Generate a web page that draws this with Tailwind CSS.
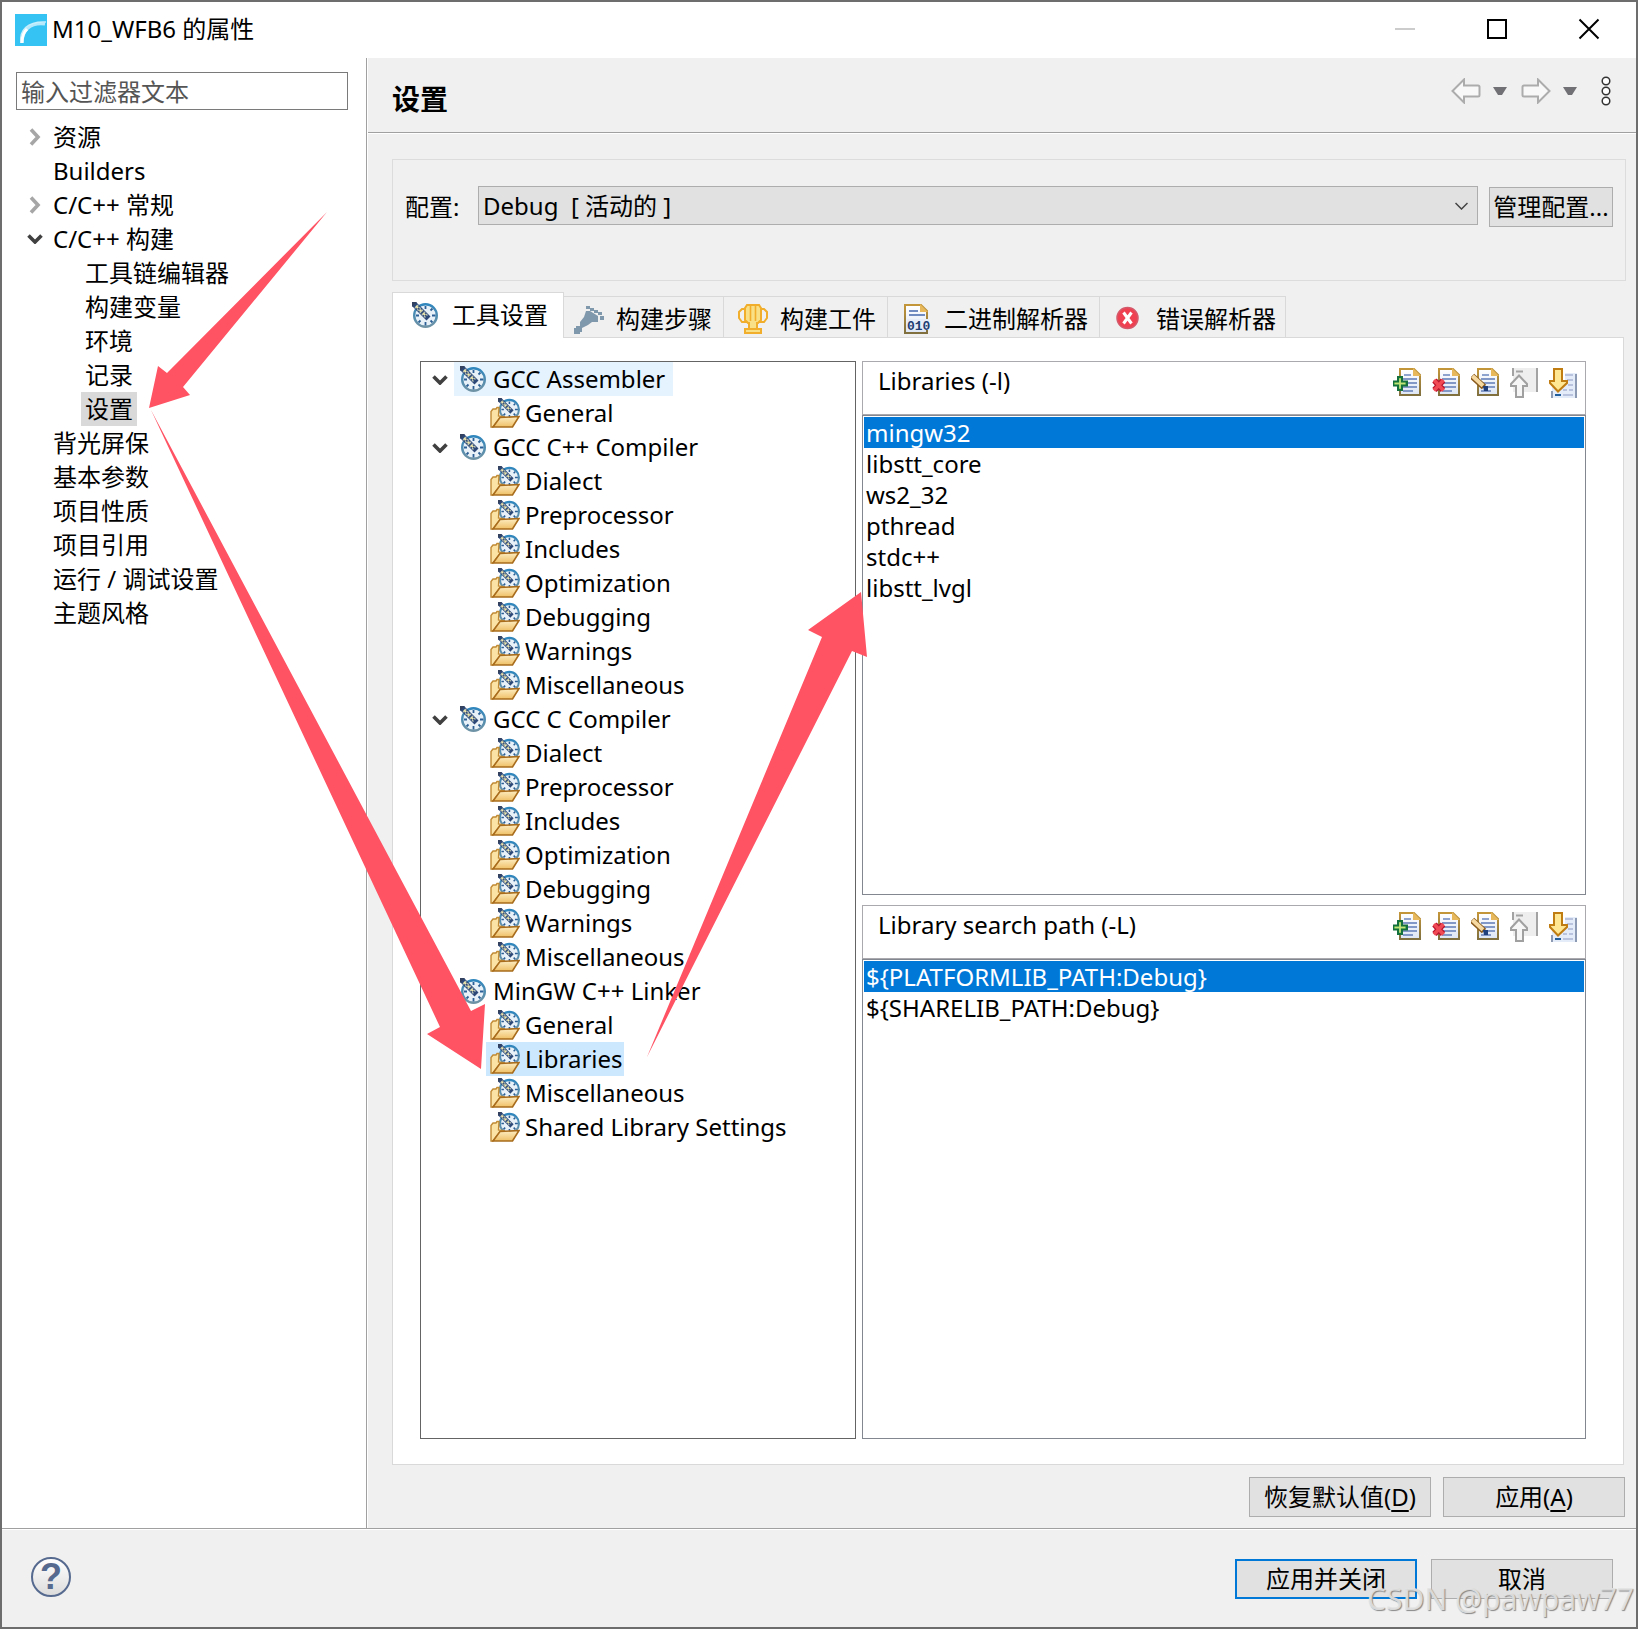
<!DOCTYPE html>
<html lang="zh-CN">
<head>
<meta charset="utf-8">
<meta name="viewport" content="width=device-width, initial-scale=1">
<title>M10_WFB6 的属性</title>
<script src="https://cdn.jsdelivr.net/npm/@tailwindcss/browser@4"></script>
</head>
<body class="relative min-h-screen overflow-x-hidden bg-[#f0f0f0] font-['Noto_Sans','Noto_Sans_CJK_SC',sans-serif] text-[24px] leading-[34px] text-black">

<!-- Shared icons -->
<svg class="absolute size-0" aria-hidden="true">
  <defs>
    <linearGradient id="gold" x1="0" y1="0" x2="0" y2="1"><stop offset="0" stop-color="#fdeec4"/><stop offset="1" stop-color="#efc066"/></linearGradient>
    <linearGradient id="frame" x1="0" y1="0" x2="0" y2="1"><stop offset="0" stop-color="#c4963a"/><stop offset="1" stop-color="#80703f"/></linearGradient>
    <linearGradient id="paper" x1="0" y1="0" x2="0" y2="1"><stop offset="0" stop-color="#ffffff"/><stop offset="1" stop-color="#dde6f5"/></linearGradient>
    <linearGradient id="rim" x1="0" y1="0" x2="0" y2="1"><stop offset="0" stop-color="#2f86bd"/><stop offset="1" stop-color="#6f93a5"/></linearGradient>
  </defs>
  <symbol id="open" viewBox="0 0 16 10"><path d="M1.5 1.5 8 8 14.500 1.500" fill="none" stroke="#404040" stroke-width="3.600"/></symbol>
  <symbol id="closed" viewBox="0 0 12 18"><path d="M2 1.500 9 9 2 16.500" fill="none" stroke="#a6a6a6" stroke-width="3.600"/></symbol>
  <symbol id="tool" viewBox="0 0 26 26">
    <circle cx="13.500" cy="13.500" r="11.300" fill="#e9f1f8" stroke="url(#rim)" stroke-width="2.400"/>
    <path d="M13.500 4v3M13.500 20v3.500M4 13.500h3M20 13.500h3.500M20.500 6.500l-2 2M6.500 20.500l2-2M20.500 20.500l-2-2" stroke="#2b5f95" stroke-width="1.800"/>
    <path d="M2 2 16.500 16.500" stroke="#2c4878" stroke-width="5.600"/>
    <path d="M3 5 14 16M5 3l11 11" stroke="#b9c3b4" stroke-width="1.300" stroke-dasharray="2 1.200"/>
    <path d="M4 4l10 10" stroke="#f3e9a8" stroke-width="1.800" stroke-dasharray="3 2"/>
    <path d="M0 0h5L0 5z" fill="#33415f"/>
  </symbol>
  <symbol id="category" viewBox="0 0 30 30">
    <svg x="8" y="0" width="22" height="22"><use href="#tool"/></svg>
    <path d="M1 13.500 3 11h3l1-1.500h2L8.500 18 15 19l-5 1-7 9H1z" fill="#fbe3a6" stroke="#c18b35" stroke-width="1.400"/>
    <path d="M10 19.500 29 18.500 22.500 29H3z" fill="url(#gold)" stroke="#a86c1c" stroke-width="1.600"/>
  </symbol>
  <symbol id="page" viewBox="0 0 30 30">
    <path d="M7 1h14l6 6v20H7z" fill="url(#paper)" stroke="url(#frame)" stroke-width="2"/>
    <path d="M20 0v8h8z" fill="#e8b95c"/>
    <path d="M11 7h7" stroke="#8fa3cf" stroke-width="2"/>
    <path d="M10 11h14M10 15h14M10 19h14M10 23h10" stroke="#8299c8" stroke-width="2"/>
  </symbol>
  <symbol id="add" viewBox="0 0 30 30"><use href="#page"/><path d="M5 9h4v4.500h5v4H9V22H5v-4.500H0v-4h5z" fill="#72c056" stroke="#14703c" stroke-width="2"/><path d="M7 10.500v10M2 15.500h10" stroke="#c4e27a" stroke-width="1.600"/></symbol>
  <symbol id="delete" viewBox="0 0 30 30"><use href="#page"/><path d="M2.500 12.500 11 22M11 12.500 2.500 22" stroke="#b8142c" stroke-width="6"/><path d="M2 12 11.500 22.500M11.500 12 2 22.500" stroke="#f04a55" stroke-width="3.400"/></symbol>
  <symbol id="edit" viewBox="0 0 30 30"><use href="#page"/><path d="M1 8 13 19" stroke="#8a5a1c" stroke-width="6.400"/><path d="M1.500 8 12 17.800" stroke="#f5d9a0" stroke-width="4"/><path d="M12 18h5v5h-4z" fill="#20407c"/></symbol>
  <symbol id="up" viewBox="0 0 30 30"><path d="M3 0h25v24H3z" fill="#eeeeee"/><path d="M3 0v8M27 0v24M6 3.500h7" stroke="#a3a3a3" stroke-width="2"/><path d="M9 7.500 17 16v2h-4v11H6V18H1v-2z" fill="#f6f6f6" stroke="#a0a0a0" stroke-width="2"/></symbol>
  <symbol id="down" viewBox="0 0 30 30"><path d="M3 18h13V5h12v25H3z" fill="#e4ecf9"/><path d="M27 6v24M3 23v7" stroke="#8c9ab4" stroke-width="2"/><path d="M16 7h8M18 12h6M19 17h5M14 22h4M20 22h4M14 27h10" stroke="#b9c3dd" stroke-width="2"/><path d="M6 27h6" stroke="#235f9c" stroke-width="2"/><path d="M5 1h8v12h5v2L9 23.500 1 15v-2h4z" fill="#ffe793" stroke="#c07d12" stroke-width="2"/></symbol>
</svg>

<div class="flex min-h-screen flex-col border-2 border-[#6d6d6d]">

  <!-- Title bar -->
  <header class="flex h-14 shrink-0 items-center bg-white pl-[13px] pr-9 pb-0.5">
    <svg class="mt-0.5 size-8 shrink-0" viewBox="0 0 32 32" aria-hidden="true"><path fill="#35c3f3" d="M0 0h32v32H0z"/><path d="M6 29C4 17 12 7 31 8" fill="none" stroke="#fff" stroke-width="1.500" opacity=".7"/><path d="M7 29C7 17 15 8 30 10" fill="none" stroke="#d6f3fd" stroke-width="3" opacity=".8"/><path d="M7 29c0-8 2-11 5-14" fill="none" stroke="#fff" stroke-width="3"/></svg>
    <h1 class="ml-[5px] grow">M10_WFB6 的属性</h1>
    <div class="flex items-center gap-[70px]">
      <button aria-label="最小化" disabled><svg class="block size-[22px]" viewBox="0 0 22 22"><path d="M1 11h20" stroke="#cccccc" stroke-width="2"/></svg></button>
      <button aria-label="最大化"><svg class="block size-[22px]" viewBox="0 0 22 22"><path d="M2 2h18v18H2z" fill="none" stroke="#000" stroke-width="2"/></svg></button>
      <button aria-label="关闭"><svg class="block size-[22px]" viewBox="0 0 22 22"><path d="M1.500 1.500l19 19M20.500 1.500l-19 19" stroke="#000" stroke-width="2"/></svg></button>
    </div>
  </header>

  <div class="flex grow">
    <!-- Property pages -->
    <nav class="w-[365px] shrink-0 border-r border-[#a0a0a0] bg-white pl-3.5 pr-[18px] pt-3.5" aria-label="属性页">
      <input type="text" aria-label="输入过滤器文本" placeholder="输入过滤器文本" class="block h-[38px] w-full border border-[#7a7a7a] bg-white px-1 placeholder:text-[#555555]">
      <ul class="mt-2.5 pl-[11px]">
        <li class="flex h-[34px] items-center gap-1.5"><span class="flex w-4 justify-center"><svg class="h-[18px] w-3"><use href="#closed"/></svg></span><a href="#" class="px-1">资源</a></li>
        <li class="flex h-[34px] items-center pl-[22px]"><a href="#" class="px-1">Builders</a></li>
        <li class="flex h-[34px] items-center gap-1.5"><span class="flex w-4 justify-center"><svg class="h-[18px] w-3"><use href="#closed"/></svg></span><a href="#" class="px-1">C/C++ 常规</a></li>
        <li>
          <div class="flex h-[34px] items-center gap-1.5"><svg class="h-2.5 w-4"><use href="#open"/></svg><a href="#" class="px-1">C/C++ 构建</a></div>
          <ul class="pl-[54px]">
            <li class="flex h-[34px] items-center"><a href="#" class="px-1">工具链编辑器</a></li>
            <li class="flex h-[34px] items-center"><a href="#" class="px-1">构建变量</a></li>
            <li class="flex h-[34px] items-center"><a href="#" class="px-1">环境</a></li>
            <li class="flex h-[34px] items-center"><a href="#" class="px-1">记录</a></li>
            <li class="flex h-[34px] items-center"><a href="#" class="bg-[#d9d9d9] px-1" aria-current="page">设置</a></li>
          </ul>
        </li>
        <li class="flex h-[34px] items-center pl-[22px]"><a href="#" class="px-1">背光屏保</a></li>
        <li class="flex h-[34px] items-center pl-[22px]"><a href="#" class="px-1">基本参数</a></li>
        <li class="flex h-[34px] items-center pl-[22px]"><a href="#" class="px-1">项目性质</a></li>
        <li class="flex h-[34px] items-center pl-[22px]"><a href="#" class="px-1">项目引用</a></li>
        <li class="flex h-[34px] items-center pl-[22px]"><a href="#" class="px-1">运行 / 调试设置</a></li>
        <li class="flex h-[34px] items-center pl-[22px]"><a href="#" class="px-1">主题风格</a></li>
      </ul>
    </nav>

    <main class="flex min-w-0 grow flex-col border-l border-white">
      <!-- Page heading -->
      <div class="flex h-[75px] shrink-0 items-start border-b border-[#a0a0a0] pl-6 pr-[25px] pt-5">
        <h2 class="grow pt-1 text-[28px] font-bold">设置</h2>
        <div class="flex h-[26px] items-center">
          <button aria-label="后退"><svg class="block h-[26px] w-[30px]" viewBox="0 0 30 26"><path d="M1.500 13 13 1.500v6h14q1.500 0 1.500 1.500v8q0 1.500-1.500 1.500H13v6z" fill="#f8f8f8" stroke="#acacac" stroke-width="2"/></svg></button>
          <button class="ml-3" aria-label="后退历史"><svg class="block h-2 w-3.5" viewBox="0 0 14 8"><path d="M0 0h14L9 8H5z" fill="#707075"/></svg></button>
          <button class="ml-3.5" aria-label="前进"><svg class="block h-[26px] w-[30px]" viewBox="0 0 30 26"><path d="M28.500 13 17 1.500v6H3q-1.500 0-1.500 1.500v8q0 1.500 1.500 1.500h14v6z" fill="#f8f8f8" stroke="#acacac" stroke-width="2"/></svg></button>
          <button class="ml-3" aria-label="前进历史"><svg class="block h-2 w-3.5" viewBox="0 0 14 8"><path d="M0 0h14L9 8H5z" fill="#707075"/></svg></button>
          <button class="ml-6" aria-label="更多"><svg class="block h-[30px] w-2.5" viewBox="0 0 10 30"><g fill="#fff" stroke="#333" stroke-width="1.500"><circle cx="5" cy="5" r="3.800"/><circle cx="5" cy="15" r="3.800"/><circle cx="5" cy="25" r="3.800"/></g></svg></button>
        </div>
      </div>

      <div class="flex grow flex-col border-t border-white pb-[11px] pl-6 pr-2.5 pt-[25px]">
        <!-- Build configuration -->
        <section class="flex h-[122px] shrink-0 items-start border border-[#dcdcdc] px-3 pt-[26px]">
          <label for="config" class="w-[73px] shrink-0 pt-1">配置:</label>
          <div class="relative min-w-0 grow">
            <select id="config" class="block h-[39px] w-full appearance-none border border-[#adadad] bg-[#e1e1e1] pl-1 pr-10 leading-[34px]">
              <option>Debug&nbsp; [ 活动的 ]</option>
            </select>
            <svg class="pointer-events-none absolute right-2.5 top-4 h-2 w-[13px]" viewBox="0 0 13 8"><path d="M.5 1 6.500 7l6-6" fill="none" stroke="#444" stroke-width="1.500"/></svg>
          </div>
          <button class="ml-[11px] mt-px h-10 w-[124px] shrink-0 border border-[#adadad] bg-[#e1e1e1] whitespace-nowrap">管理配置...</button>
        </section>

        <!-- Tabs -->
        <div class="mr-0.5 mt-[11px] flex h-[46px] shrink-0 items-end whitespace-nowrap" role="tablist">
          <button role="tab" aria-selected="true" class="flex h-full items-center gap-3.5 border-x border-t border-[#d9d9d9] bg-white pb-0.5 pl-[19px] pr-[15px]"><svg class="size-[26px]"><use href="#tool"/></svg>工具设置</button>
          <button role="tab" aria-selected="false" class="flex h-[42px] items-center gap-3 border-y border-r border-[#d9d9d9] pl-2.5 pr-[11px] pt-1">
            <svg class="size-[30px]" viewBox="0 0 30 30"><path d="M12 7h4l8 5v6h-6l-4 3-6 3v4H6v2H0v-6h2v-2h4v-4l4-5z" fill="#8098ab"/><path d="M12 2h4v3h-4zM16 4h4v3h-4zM20 6h4v3h-4zM24 8h4v3h-4zM26 12h4v4h-4z" fill="#8098ab"/></svg>构建步骤</button>
          <button role="tab" aria-selected="false" class="flex h-[42px] items-center gap-3 border-y border-r border-[#d9d9d9] pl-3.5 pr-[11px] pt-1">
            <svg class="size-[30px]" viewBox="0 0 30 30"><path d="M8 5H4L1 8v6l3 4h5M22 5h4l3 3v6l-3 4h-5" fill="none" stroke="#f0ae2c" stroke-width="2"/><path d="M9 1h12l2 3v12l-3 3h-1v6h4v4H7v-4h4v-6h-1l-3-3V4z" fill="#f9df86" stroke="#f0ae2c" stroke-width="2"/><path d="M12.500 2v15M17.500 2v15" stroke="#f0ae2c" stroke-width="1.600"/><path d="M9 25h12" stroke="#f0ae2c" stroke-width="2"/></svg>构建工件</button>
          <button role="tab" aria-selected="false" class="flex h-[42px] items-center gap-3 border-y border-r border-[#d9d9d9] pl-3.5 pr-[11px] pt-1">
            <svg class="size-[30px]" viewBox="0 0 30 30"><path d="M3 1h16l6 6v22H3z" fill="url(#paper)" stroke="url(#frame)" stroke-width="2"/><path d="M18 0v8h8z" fill="#e8b95c"/><path d="M7 7h9M7 11h16" stroke="#6f8bbf" stroke-width="2"/><path d="M5 15h22v11H5z" fill="#e6edf8"/><text x="5" y="26" font-family="Liberation Mono" font-weight="700" font-size="13" fill="#1f3d73">010</text></svg>二进制解析器</button>
          <button role="tab" aria-selected="false" class="flex h-[42px] items-center gap-3 border-y border-r border-[#d9d9d9] pl-3.5 pr-[9px] pt-1">
            <svg class="size-[30px]" viewBox="0 0 30 30"><circle cx="13.500" cy="14" r="10.500" fill="#ee4050" stroke="#d4596a" stroke-width="1.500"/><path d="M9.500 8.500l8 11M17.500 8.500l-8 11" stroke="#fff" stroke-width="3"/></svg>错误解析器</button>
          <div class="h-[42px] grow border-b border-[#d9d9d9]"></div>
        </div>

        <!-- Tool settings -->
        <section role="tabpanel" class="mr-0.5 flex grow gap-1.5 border-x border-b border-[#d9d9d9] bg-white pb-[25px] pl-[27px] pr-[37px] pt-[23px]">
          <ul class="w-[436px] shrink-0 border border-[#646464] whitespace-nowrap">
            <li>
              <div class="flex h-[34px] items-center gap-1.5 pl-[11px]"><svg class="mt-0.5 h-2.5 w-4"><use href="#open"/></svg><a href="#" class="flex items-center gap-[7px] bg-[#e5f3ff] pl-1.5 pr-2"><svg class="size-[26px]"><use href="#tool"/></svg>GCC Assembler</a></div>
              <ul class="pl-[65px]">
                <li class="flex"><a href="#" class="flex items-center gap-[5px] pl-1 pr-px"><svg class="size-[30px]"><use href="#category"/></svg>General</a></li>
              </ul>
            </li>
            <li>
              <div class="flex h-[34px] items-center gap-1.5 pl-[11px]"><svg class="mt-0.5 h-2.5 w-4"><use href="#open"/></svg><a href="#" class="flex items-center gap-[7px] pl-1.5 pr-2"><svg class="size-[26px]"><use href="#tool"/></svg>GCC C++ Compiler</a></div>
              <ul class="pl-[65px]">
                <li class="flex"><a href="#" class="flex items-center gap-[5px] pl-1 pr-px"><svg class="size-[30px]"><use href="#category"/></svg>Dialect</a></li>
                <li class="flex"><a href="#" class="flex items-center gap-[5px] pl-1 pr-px"><svg class="size-[30px]"><use href="#category"/></svg>Preprocessor</a></li>
                <li class="flex"><a href="#" class="flex items-center gap-[5px] pl-1 pr-px"><svg class="size-[30px]"><use href="#category"/></svg>Includes</a></li>
                <li class="flex"><a href="#" class="flex items-center gap-[5px] pl-1 pr-px"><svg class="size-[30px]"><use href="#category"/></svg>Optimization</a></li>
                <li class="flex"><a href="#" class="flex items-center gap-[5px] pl-1 pr-px"><svg class="size-[30px]"><use href="#category"/></svg>Debugging</a></li>
                <li class="flex"><a href="#" class="flex items-center gap-[5px] pl-1 pr-px"><svg class="size-[30px]"><use href="#category"/></svg>Warnings</a></li>
                <li class="flex"><a href="#" class="flex items-center gap-[5px] pl-1 pr-px"><svg class="size-[30px]"><use href="#category"/></svg>Miscellaneous</a></li>
              </ul>
            </li>
            <li>
              <div class="flex h-[34px] items-center gap-1.5 pl-[11px]"><svg class="mt-0.5 h-2.5 w-4"><use href="#open"/></svg><a href="#" class="flex items-center gap-[7px] pl-1.5 pr-2"><svg class="size-[26px]"><use href="#tool"/></svg>GCC C Compiler</a></div>
              <ul class="pl-[65px]">
                <li class="flex"><a href="#" class="flex items-center gap-[5px] pl-1 pr-px"><svg class="size-[30px]"><use href="#category"/></svg>Dialect</a></li>
                <li class="flex"><a href="#" class="flex items-center gap-[5px] pl-1 pr-px"><svg class="size-[30px]"><use href="#category"/></svg>Preprocessor</a></li>
                <li class="flex"><a href="#" class="flex items-center gap-[5px] pl-1 pr-px"><svg class="size-[30px]"><use href="#category"/></svg>Includes</a></li>
                <li class="flex"><a href="#" class="flex items-center gap-[5px] pl-1 pr-px"><svg class="size-[30px]"><use href="#category"/></svg>Optimization</a></li>
                <li class="flex"><a href="#" class="flex items-center gap-[5px] pl-1 pr-px"><svg class="size-[30px]"><use href="#category"/></svg>Debugging</a></li>
                <li class="flex"><a href="#" class="flex items-center gap-[5px] pl-1 pr-px"><svg class="size-[30px]"><use href="#category"/></svg>Warnings</a></li>
                <li class="flex"><a href="#" class="flex items-center gap-[5px] pl-1 pr-px"><svg class="size-[30px]"><use href="#category"/></svg>Miscellaneous</a></li>
              </ul>
            </li>
            <li>
              <div class="flex h-[34px] items-center gap-1.5 pl-[11px]"><svg class="mt-0.5 h-2.5 w-4"><use href="#open"/></svg><a href="#" class="flex items-center gap-[7px] pl-1.5 pr-2"><svg class="size-[26px]"><use href="#tool"/></svg>MinGW C++ Linker</a></div>
              <ul class="pl-[65px]">
                <li class="flex"><a href="#" class="flex items-center gap-[5px] pl-1 pr-px"><svg class="size-[30px]"><use href="#category"/></svg>General</a></li>
                <li class="flex"><a href="#" class="flex items-center gap-[5px] bg-[#cce8ff] pl-1 pr-px"><svg class="size-[30px]"><use href="#category"/></svg>Libraries</a></li>
                <li class="flex"><a href="#" class="flex items-center gap-[5px] pl-1 pr-px"><svg class="size-[30px]"><use href="#category"/></svg>Miscellaneous</a></li>
                <li class="flex"><a href="#" class="flex items-center gap-[5px] pl-1 pr-px"><svg class="size-[30px]"><use href="#category"/></svg>Shared Library Settings</a></li>
              </ul>
            </li>
          </ul>

          <div class="flex min-w-0 grow flex-col gap-2.5">
            <section class="flex flex-1 flex-col">
              <div class="flex h-[54px] shrink-0 items-start border border-[#a9a9ae] pl-[15px] pr-1.5 pt-1">
                <h3 class="grow leading-[30px]">Libraries (-l)</h3>
                <div class="flex gap-[9px] pt-0.5">
                  <button aria-label="添加"><svg class="block size-[30px]"><use href="#add"/></svg></button>
                  <button aria-label="删除"><svg class="block size-[30px]"><use href="#delete"/></svg></button>
                  <button aria-label="编辑"><svg class="block size-[30px]"><use href="#edit"/></svg></button>
                  <button aria-label="上移" disabled><svg class="block size-[30px]"><use href="#up"/></svg></button>
                  <button aria-label="下移"><svg class="block size-[30px]"><use href="#down"/></svg></button>
                </div>
              </div>
              <ul role="listbox" aria-label="Libraries (-l)" class="grow border border-[#828790] p-px leading-[31px]">
                <li role="option" aria-selected="true" class="bg-[#0078d7] pl-0.5 text-white">mingw32</li>
                <li role="option" class="pl-0.5">libstt_core</li>
                <li role="option" class="pl-0.5">ws2_32</li>
                <li role="option" class="pl-0.5">pthread</li>
                <li role="option" class="pl-0.5">stdc++</li>
                <li role="option" class="pl-0.5">libstt_lvgl</li>
              </ul>
            </section>
            <section class="flex flex-1 flex-col">
              <div class="flex h-[54px] shrink-0 items-start border border-[#a9a9ae] pl-[15px] pr-1.5 pt-1">
                <h3 class="grow leading-[30px]">Library search path (-L)</h3>
                <div class="flex gap-[9px] pt-0.5">
                  <button aria-label="添加"><svg class="block size-[30px]"><use href="#add"/></svg></button>
                  <button aria-label="删除"><svg class="block size-[30px]"><use href="#delete"/></svg></button>
                  <button aria-label="编辑"><svg class="block size-[30px]"><use href="#edit"/></svg></button>
                  <button aria-label="上移" disabled><svg class="block size-[30px]"><use href="#up"/></svg></button>
                  <button aria-label="下移"><svg class="block size-[30px]"><use href="#down"/></svg></button>
                </div>
              </div>
              <ul role="listbox" aria-label="Library search path (-L)" class="grow border border-[#828790] p-px leading-[31px]">
                <li role="option" aria-selected="true" class="bg-[#0078d7] pl-0.5 text-white">${PLATFORMLIB_PATH:Debug}</li>
                <li role="option" class="pl-0.5">${SHARELIB_PATH:Debug}</li>
              </ul>
            </section>
          </div>
        </section>

        <div class="mr-px mt-3 flex justify-end gap-3">
          <button class="h-10 w-[182px] border border-[#adadad] bg-[#e1e1e1]">恢复默认值(<span class="underline underline-offset-4">D</span>)</button>
          <button class="h-10 w-[182px] border border-[#adadad] bg-[#e1e1e1]">应用(<span class="underline underline-offset-4">A</span>)</button>
        </div>
      </div>
    </main>
  </div>

  <!-- Dialog buttons -->
  <footer class="shrink-0 border-t border-[#a0a0a0]">
    <div class="flex items-center gap-3.5 border-t border-white pb-7 pl-[29px] pr-[23px] pt-[29px]">
      <button aria-label="帮助" class="-mt-1 flex size-10 items-center justify-center rounded-full border-2 border-[#566a8f] bg-linear-to-b from-white to-[#dcdcdc] font-['Liberation_Sans',sans-serif] text-[36px] font-bold text-[#566a8f]">?</button>
      <button class="ml-auto h-10 w-[182px] border-2 border-[#0078d7] bg-[#e1e1e1]">应用并关闭</button>
      <button class="h-10 w-[182px] border border-[#adadad] bg-[#e1e1e1]">取消</button>
    </div>
  </footer>
</div>

<!-- Annotation arrows -->
<svg class="pointer-events-none absolute left-0 top-0 h-[1100px] w-[900px]" viewBox="0 0 900 1100" fill="#ff5263" aria-hidden="true">
  <path d="M327 212 167 373l-9-7-9 42 41-13-7-8z"/>
  <path d="M151 410 440 1027l-13 7 54 35 4-65-14 7z"/>
  <path d="M647 1057 822 637l-14-7 53-38 6 65-15-6z"/>
</svg>

<!-- Watermark -->
<div class="pointer-events-none absolute bottom-2.5 right-1 text-[30px] leading-[40px] text-[#e4e4e4]/90 [text-shadow:1px_1px_1px_#888888]">CSDN @pawpaw77</div>

</body>
</html>
